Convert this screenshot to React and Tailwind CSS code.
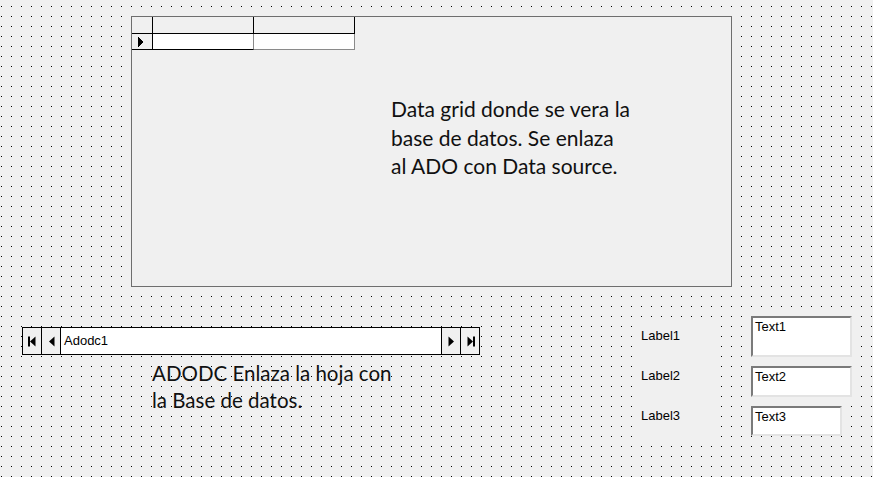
import React from 'react';

const small = { fontFamily: '"Liberation Sans", Arial, sans-serif' };
const big = { fontFamily: 'Lato, "Open Sans", sans-serif' };

function DotGrid() {
  return (
    <svg className="absolute inset-0 w-full h-full" xmlns="http://www.w3.org/2000/svg">
      <defs>
        <pattern id="dots" x="1" y="6" width="10" height="10" patternUnits="userSpaceOnUse">
          <rect x="0" y="0" width="1" height="1" fill="#000" />
        </pattern>
      </defs>
      <rect width="100%" height="100%" fill="url(#dots)" />
    </svg>
  );
}

function Tri({ dir = 'right', bar }) {
  // black navigation arrow, optional end bar
  return (
    <svg width="11" height="11" viewBox="0 0 11 11">
      {dir === 'left' ? (
        <>
          {bar && <rect x="1" y="0.5" width="2" height="10" fill="#000" />}
          <polygon points="8.5,0.5 8.5,10.5 3,5.5" fill="#000" />
        </>
      ) : (
        <>
          <polygon points="2.5,0.5 2.5,10.5 8,5.5" fill="#000" />
          {bar && <rect x="8" y="0.5" width="2" height="10" fill="#000" />}
        </>
      )}
    </svg>
  );
}

function NavButton({ children }) {
  return (
    <div className="w-[19px] h-full flex items-center justify-center bg-[#f0f0f0] border-r border-black">
      {children}
    </div>
  );
}

function TextBox({ text, className }) {
  return (
    <div
      className={`absolute bg-white border-2 border-t-[#7a7a7a] border-l-[#7a7a7a] border-r-[#e3e3e3] border-b-[#e3e3e3] text-[13px] leading-[15px] text-black pl-[2px] pt-[1px] ${className}`}
      style={small}
    >
      {text}
    </div>
  );
}

export default function App() {
  return (
    <div className="relative w-[873px] h-[477px] bg-[#f0f0f0] overflow-hidden">
      <DotGrid />

      {/* Data grid */}
      <div className="absolute left-[131px] top-[16px] w-[601px] h-[271px] border border-[#6e6e6e] bg-[#f0f0f0]">
        <div className="flex flex-col w-[223px]">
          <div className="flex h-[17px]">
            <div className="w-[21px] border-r border-b border-black" />
            <div className="w-[101px] border-r border-b border-black" />
            <div className="w-[101px] border-r border-b border-black" />
          </div>
          <div className="flex h-[16px]">
            <div className="w-[21px] border-r border-b border-black flex items-center pl-[6px]">
              <svg width="7" height="10" viewBox="0 0 7 10" shapeRendering="crispEdges">
                <polygon points="0,0 0,10 6,5" fill="#000" />
              </svg>
            </div>
            <div className="w-[101px] bg-white border-r border-b border-r-[#8a8a8a] border-b-black" />
            <div className="w-[101px] bg-white border-r border-b border-[#8a8a8a]" />
          </div>
        </div>
        <p
          className="absolute left-[259px] top-[78px] text-[21px] leading-[28.5px] text-[#111]"
          style={big}
        >
          Data grid donde se vera la
          <br />
          base de datos. Se enlaza
          <br />
          al ADO con Data source.
        </p>
      </div>

      {/* ADODC control */}
      <div className="absolute left-[22px] top-[327px] w-[458px] h-[28px] flex border-t border-l border-b border-black">
        <NavButton>
          <Tri dir="left" bar />
        </NavButton>
        <NavButton>
          <Tri dir="left" />
        </NavButton>
        <div className="flex-1 bg-white border-r border-black flex items-center pl-[3px] text-[13px] text-black" style={small}>
          Adodc1
        </div>
        <NavButton>
          <Tri dir="right" />
        </NavButton>
        <NavButton>
          <Tri dir="right" bar />
        </NavButton>
      </div>

      <p className="absolute left-[152px] top-[360px] text-[20.5px] leading-[27px] text-[#111]" style={big}>
        ADODC Enlaza la hoja con
        <br />
        la Base de datos.
      </p>

      {/* Labels */}
      <div className="absolute left-[636px] top-[320px] w-[77px] h-[120px] bg-[#f0f0f0] flex flex-col text-[13px] text-black" style={small}>
        <div className="h-[40px] pl-[5px] pt-[6px]">Label1</div>
        <div className="h-[40px] pl-[5px] pt-[6px]">Label2</div>
        <div className="h-[40px] pl-[5px] pt-[6px]">Label3</div>
      </div>

      <TextBox text="Text1" className="left-[751px] top-[316px] w-[101px] h-[41px]" />
      <TextBox text="Text2" className="left-[751px] top-[366px] w-[101px] h-[31px]" />
      <TextBox text="Text3" className="left-[751px] top-[406px] w-[91px] h-[30px]" />
    </div>
  );
}
